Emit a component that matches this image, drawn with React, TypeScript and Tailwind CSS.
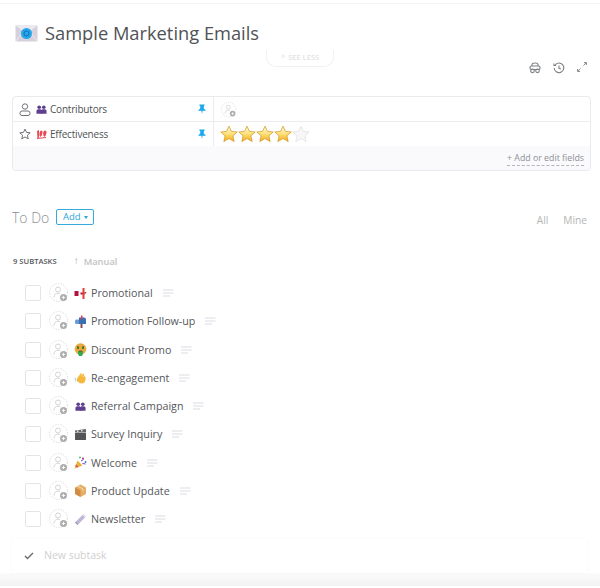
import React from "react";

const Avatar = ({ size = 20 }: { size?: number }) => (
  <svg width={size} height={size} viewBox="0 0 20 20" className="shrink-0">
    <circle cx="9.500" cy="9.500" r="9" fill="none" stroke="#d2d2d2" strokeWidth="0.900" strokeDasharray="1.200 1.400" />
    <circle cx="9" cy="6.500" r="2.500" fill="none" stroke="#cfcfcf" strokeWidth="0.900" />
    <path d="M5 14.500c0-2.800 1.800-4.300 4-4.300 .9 0 1.600.2 2.200.6" fill="none" stroke="#cfcfcf" strokeWidth="0.900" />
    <circle cx="14.500" cy="14.500" r="3.500" fill="#adadad" />
    <path d="M12.800 14.500h3.400M14.500 12.800v3.400" stroke="#fff" strokeWidth="0.900" />
  </svg>
);

const Pin = () => (
  <svg width="8" height="10" viewBox="0 0 9 11">
    <path d="M1.500 0.500h6v1L6.500 2v3l2 1.500v1H5.200L4.500 11l-.7-3.500H.5v-1L2.500 5V2l-1-.5z" fill="#1ba8ee" />
  </svg>
);

const Star = ({ on }: { on: boolean }) => (
  <svg width="18" height="18" viewBox="0 0 24 24">
    <defs>
      <linearGradient id="gold" x1="0" y1="0" x2="0" y2="1">
        <stop offset="0" stopColor="#fffbe0" />
        <stop offset="0.5" stopColor="#fde27a" />
        <stop offset="1" stopColor="#f3a91c" />
      </linearGradient>
    </defs>
    <path
      d="M12 1.500l3.200 7 7.800.8-5.800 5.100 1.700 7.600L12 18.100 5.100 22l1.700-7.600L1 9.300l7.800-.8z"
      fill={on ? "url(#gold)" : "#f7f7f7"}
      stroke={on ? "#d39a26" : "#e0e0e0"}
      strokeWidth="1"
      strokeLinejoin="round"
    />
  </svg>
);

const People = () => (
  <svg width="11" height="11" viewBox="0 0 12 12">
    <circle cx="3.500" cy="3.500" r="2" fill="#5e3f8f" />
    <circle cx="8.500" cy="3.500" r="2" fill="#5e3f8f" />
    <path d="M.5 10.500V7.500c0-1.200 1-1.800 3-1.800s3 .6 3 1.800v3z" fill="#5e3f8f" />
    <path d="M5.500 10.500V7.500c0-1.200 1-1.800 3-1.800s3 .6 3 1.800v3z" fill="#5e3f8f" />
  </svg>
);

const Hundred = () => (
  <svg width="11" height="12" viewBox="0 0 11 12">
    <path d="M1 3l2-1v7.500L1.500 11zM4 3.500C5 1.800 6.800 2 6.500 4.500S5 9.500 4 8.500 3.500 4.500 4 3.500zM7.500 3.500C9 1.800 10.800 2 10.500 4.500S9 9.500 8 8.500 7 4.500 7.500 3.500z" fill="#ea4a52" />
    <path d="M1 10.500l9-1" stroke="#ea4a52" strokeWidth="1" />
  </svg>
);

const Emoji = ({ name }: { name: string }) => {
  const s = { width: 13, height: 13, viewBox: "0 0 13 13" };
  switch (name) {
    case "megaphone":
      return (
        <svg {...s}>
          <rect x="0.500" y="4" width="4" height="5" fill="#b3123f" />
          <path d="M6.500 5.500h3v2h-3z" fill="#b3123f" />
          <path d="M8.500 1h2v11h-2z" fill="#e63b3b" />
          <path d="M10.500 5h2l-2 3z" fill="#c8202b" />
        </svg>
      );
    case "mailbox":
      return (
        <svg {...s}>
          <rect x="1" y="4.500" width="5" height="4.500" rx="1.500" fill="#6d9ad6" />
          <path d="M5 2.500h5a2 2 0 012 2v4.500H5z" fill="#3b6fb0" />
          <rect x="7" y="0.500" width="1.500" height="4" fill="#d83a4c" />
          <rect x="6.500" y="9" width="2" height="4" fill="#8a4a5c" />
        </svg>
      );
    case "money":
      return (
        <svg {...s}>
          <circle cx="6.500" cy="6" r="5.800" fill="#eaa93c" />
          <rect x="3" y="3.200" width="2" height="2.800" fill="#4a7a30" />
          <rect x="8" y="3.200" width="2" height="2.800" fill="#4a7a30" />
          <path d="M4 8h5v2.500L8 13H5l-1-2.500z" fill="#35a852" />
          <path d="M5 8h3" stroke="#7a4a1a" strokeWidth="1" />
        </svg>
      );
    case "wave":
      return (
        <svg {...s}>
          <path d="M0.500 7l1 3.500 1-.5-1-3.500z" fill="#a8cdee" />
          <path d="M4 11.500C2.500 10 2.500 7.500 4 6l3-4 1 .8L7 5l2.500-2.500 1 1L9 6l2-1 .5 1.500c.5 3-1 6-4 6-1.500 0-2.500-.8-3.500-2z" fill="#f5b83d" />
        </svg>
      );
    case "people":
      return <People />;
    case "clapper":
      return (
        <svg {...s}>
          <rect x="1" y="4.500" width="11" height="7.500" rx="0.500" fill="#555" />
          <path d="M1 2.500l11-1.500v3H1z" fill="#666" />
          <path d="M3 2.500l1.500-.3v1.800H3zM7 2l1.500-.2V3.500H7z" fill="#dcdcdc" />
        </svg>
      );
    case "party":
      return (
        <svg {...s}>
          <path d="M0.500 12.500l3-8 5 5z" fill="#e8b23a" />
          <path d="M2 8.500l2.500 2.500-1.500.6L1.400 10z" fill="#d9475e" />
          <circle cx="9" cy="2.500" r="1.100" fill="#d83a8c" />
          <circle cx="11.500" cy="6" r="1" fill="#3a78d8" />
          <circle cx="6" cy="1.500" r="0.900" fill="#3fb56a" />
          <path d="M7 5l2.500-1.500M8.500 7.500l3 .5" stroke="#7a3fc8" strokeWidth="1" />
        </svg>
      );
    case "package":
      return (
        <svg {...s}>
          <path d="M6.500 0.500l5.500 3v6.500l-5.500 3-5.500-3V3.500z" fill="#e7ad66" />
          <path d="M6.500 6.500v6.500l-5.500-3V3.500z" fill="#d28c42" />
          <path d="M3.500 2l5.500 3v2" stroke="#f3dcb4" strokeWidth="1" fill="none" />
        </svg>
      );
    default:
      return (
        <svg {...s}>
          <path d="M2 8.500L8.500 2 11 4.500 4.500 11z" fill="#c0b6d6" />
          <path d="M8.500 2l1-1 2.500 2.500-1 1z" fill="#dedaea" />
          <path d="M2 8.500l-1 1 2.500 2.500 1-1z" fill="#9a8fb6" />
        </svg>
      );
  }
};

const Lines = () => (
  <svg width="11" height="8" viewBox="0 0 11 8" className="shrink-0">
    <path d="M0 1h10.500M0 4h10.500M0 7h7" stroke="#dcdce4" strokeWidth="1" />
  </svg>
);

const tasks = [
  ["megaphone", "Promotional"],
  ["mailbox", "Promotion Follow-up"],
  ["money", "Discount Promo"],
  ["wave", "Re-engagement"],
  ["people", "Referral Campaign"],
  ["clapper", "Survey Inquiry"],
  ["party", "Welcome"],
  ["package", "Product Update"],
  ["wrench", "Newsletter"],
];

export default function App() {
  return (
    <div className="relative h-[588px] w-[600px] overflow-hidden bg-white font-['Open_Sans',sans-serif] text-[#4f5155]">
      <div className="h-[4px] border-b border-[#f4f4f4]" />

      <div className="flex h-[46px] items-center gap-[7px] pl-[15px] pt-[12px]">
        <svg width="23" height="17" viewBox="0 0 23 17" className="shrink-0">
          <rect x="0.500" y="0.500" width="22" height="16" fill="#d5d0dc" />
          <path d="M0.500 0.500L11.500 9l11-8.500z" fill="#ece9f1" />
          <path d="M0.500 16.500L8 7M22.500 16.500L15 7" stroke="#f3f1f6" strokeWidth="0.800" />
          <circle cx="11.500" cy="8.500" r="5.500" fill="#26a6ea" />
          <circle cx="11.500" cy="8.500" r="2.500" fill="none" stroke="#0f6fae" strokeWidth="1" />
        </svg>
        <span className="text-[18.300px] leading-none whitespace-nowrap text-[#505256]">Sample Marketing Emails</span>
      </div>

      <div className="absolute left-[266px] top-[50px] flex h-[17px] w-[68px] items-center justify-center gap-[3px] rounded-b-[10px] border-b border-x border-[#f1f1f5] text-[7.500px] font-semibold text-[#e2e2e6]">
        <span>^</span>
        <span>SEE LESS</span>
      </div>

      <div className="flex h-[46px] items-start justify-end gap-[12px] pr-[13px] pt-[12px]">
        <svg width="12" height="12" viewBox="0 0 12 12" fill="none" stroke="#7d8085" strokeWidth="1.100">
          <path d="M3 4V2.500C3 1.500 4 1 6 1s3 .5 3 1.500V4" />
          <rect x="1" y="4" width="10" height="3.500" rx="1.500" />
          <circle cx="3.500" cy="8.800" r="1.800" />
          <circle cx="8.500" cy="8.800" r="1.800" />
        </svg>
        <svg width="12" height="12" viewBox="0 0 12 12" fill="none" stroke="#7d8085" strokeWidth="1.100">
          <path d="M2 3.200A4.800 4.800 0 111.200 6" />
          <path d="M1 1.500v2h2M6 3.500V6.300l2 .8" />
        </svg>
        <svg width="10" height="10" viewBox="0 0 10 10" fill="none" stroke="#8d9095" strokeWidth="1">
          <path d="M6.500 3.500L9 1M1 9l2.500-2.500" />
          <path d="M7 0.500h2.500V3M0.500 7v2.500H3" fill="#8d9095" />
        </svg>
      </div>

      <div className="mx-[12px] h-[75px] w-[579px] overflow-hidden rounded-[4px] border border-[#e9e9ee]">
        <div className="flex h-[25px] border-b border-[#ececf0]">
          <div className="flex w-[201px] items-center border-r border-[#ececf0] pl-[6px] pr-[7px]">
            <svg width="12" height="13" viewBox="0 0 12 13" fill="none" stroke="#6f7276" strokeWidth="1" className="shrink-0">
              <circle cx="6" cy="3.500" r="2.700" />
              <rect x="1" y="8" width="10" height="4.500" rx="2" />
            </svg>
            <span className="ml-[5px]"><People /></span>
            <span className="ml-[3px] flex-1 text-[10px] tracking-[-0.2px] whitespace-nowrap">Contributors</span>
            <Pin />
          </div>
          <div className="flex items-center pl-[7px] pt-[2px]"><Avatar size={16} /></div>
        </div>
        <div className="flex h-[24px]">
          <div className="flex w-[201px] items-center border-r border-[#ececf0] pl-[6px] pr-[7px]">
            <svg width="12" height="12" viewBox="0 0 24 24" fill="none" stroke="#6f7276" strokeWidth="2" strokeLinejoin="round" className="shrink-0">
              <path d="M12 2l3 6.800 7.400.7-5.600 4.900 1.700 7.300L12 17.900l-6.500 3.800 1.700-7.300L1.600 9.500 9 8.800z" />
            </svg>
            <span className="ml-[5px]"><Hundred /></span>
            <span className="ml-[3px] flex-1 text-[10px] tracking-[-0.2px] whitespace-nowrap">Effectiveness</span>
            <Pin />
          </div>
          <div className="flex items-center pl-[6px]">
            {[true, true, true, true, false].map((on, i) => (
              <Star key={i} on={on} />
            ))}
          </div>
        </div>
        <div className="flex h-[24px] items-center justify-end bg-[#fafafc] pr-[6px] pt-[1px]">
          <span className="border-b border-dashed border-[#b4b6bc] text-[8.800px] leading-[13px] text-[#8d9096]">+ Add or edit fields</span>
        </div>
      </div>

      <div className="mt-[34px] flex h-[24px] items-center pl-[12px] pr-[13px]">
        <span className="text-[14px] font-light text-[#8d8f92]">To Do</span>
        <span className="ml-[7px] flex h-[16px] w-[38px] items-center justify-center gap-[3px] rounded-[2px] border border-[#35aadb] text-[9.500px] text-[#2ba5d9]">
          Add
          <span className="mt-[1px] h-0 w-0 border-x-[2.500px] border-t-[3px] border-x-transparent border-t-[#2ba5d9]" />
        </span>
        <span className="ml-auto mt-[8px] text-[10.200px] text-[#b5b5b5]">All</span>
        <span className="ml-[15px] mt-[8px] text-[10.200px] text-[#b5b5b5]">Mine</span>
      </div>

      <div className="mt-[26px] flex h-[14px] items-center pl-[13px]">
        <span className="text-[7.600px] font-semibold text-[#55575b]">9 SUBTASKS</span>
        <span className="ml-[17px] mb-[3px] text-[10px] text-[#a8a8a8]">↑</span>
        <span className="ml-[5px] text-[9.300px] font-semibold text-[#c2c2c2]">Manual</span>
      </div>

      <div className="mt-[10px]">
        {tasks.map(([icon, label]) => (
          <div key={label} className="flex h-[28.250px] items-center pl-[25px]">
            <span className="h-[16px] w-[16px] shrink-0 rounded-[2px] border border-[#e4e4e8]" />
            <span className="ml-[8px]"><Avatar /></span>
            <span className="ml-[5px] flex w-[13px] justify-center"><Emoji name={icon} /></span>
            <span className="ml-[4px] mr-[10px] text-[10.700px] whitespace-nowrap text-[#55575b]">{label}</span>
            <Lines />
          </div>
        ))}
      </div>

      <div className="absolute bottom-[2px] left-0 h-[13px] w-full bg-gradient-to-b from-[#fbfbfb] to-[#f2f2f2]" />
      <div className="absolute left-[12px] top-[539px] flex h-[34px] w-[575px] items-center bg-white pl-[12px] shadow-[0_0_4px_rgba(0,0,0,0.03)]">
        <svg width="10" height="8" viewBox="0 0 10 8" fill="none" stroke="#6a6c70" strokeWidth="1.400">
          <path d="M1 4l2.500 2.500L9 1" />
        </svg>
        <span className="ml-[10px] text-[10.500px] text-[#cfcfcf]">New subtask</span>
      </div>
    </div>
  );
}
